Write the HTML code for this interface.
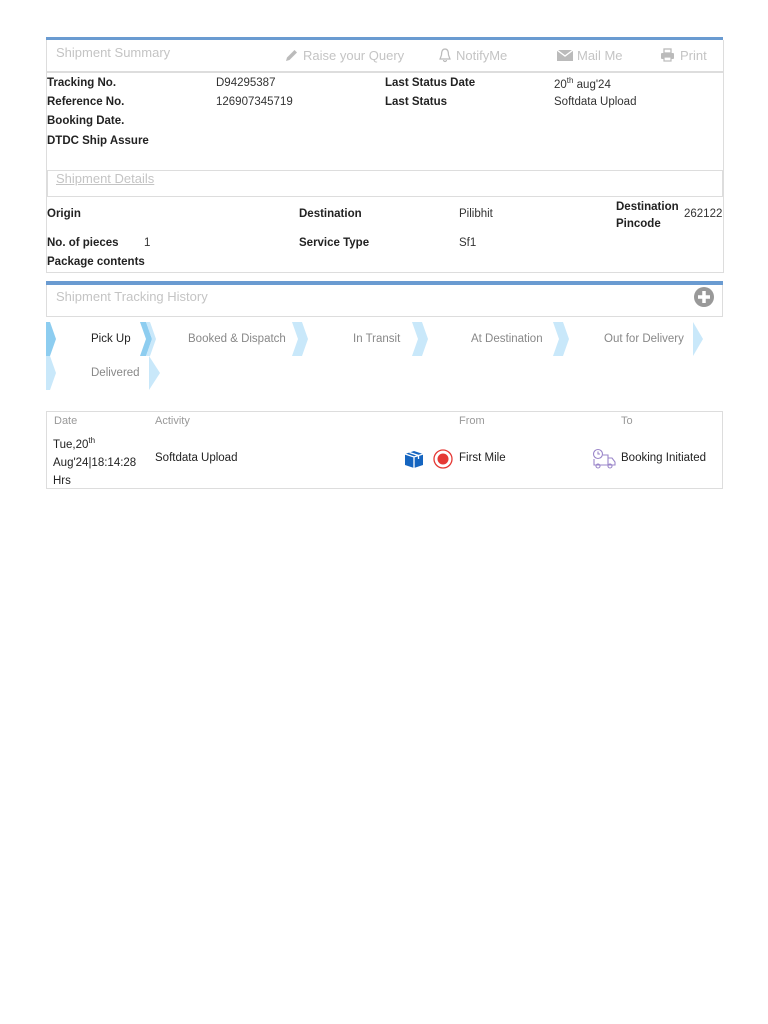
<!DOCTYPE html>
<html><head><meta charset="utf-8"><style>
body{margin:0;width:768px;height:1024px;background:#fff;font-family:"Liberation Sans",sans-serif;font-size:11.5px;color:#333;position:relative;overflow:hidden}
.a{position:absolute;white-space:nowrap}
.b{font-weight:bold;color:#222}
.l{color:#c4c4c4;font-size:13px}
.g{color:#888}
</style></head><body>
<div class="a" style="left:46px;top:37px;width:677px;height:3px;background:#6a9bd1"></div>
<div class="a" style="left:46px;top:40px;width:676px;height:31px;border:1px solid #ddd;border-top:0;border-bottom:2px solid #ddd"></div>
<div class="a" style="left:46px;top:40px;width:676px;height:232px;border-left:1px solid #ddd;border-right:1px solid #ddd;border-bottom:1px solid #ddd"></div>
<div class="a l" style="left:56px;top:45px">Shipment Summary</div>
<svg class="a" style="left:285px;top:48px" width="14" height="14" viewBox="0 0 14 14"><path d="M1 13 L2 9.5 L9.5 2 L12 4.5 L4.5 12 Z" fill="#bbb"/></svg>
<div class="a l" style="left:303px;top:48px">Raise your Query</div>
<svg class="a" style="left:438px;top:47px" width="14" height="16" viewBox="0 0 14 16"><path d="M7 2 C4 2 3.5 5 3.5 8 L2 12 H12 L10.5 8 C10.5 5 10 2 7 2 Z M5.5 13 a1.5 1.5 0 0 0 3 0" fill="none" stroke="#bbb" stroke-width="1.2"/></svg>
<div class="a l" style="left:456px;top:48px">NotifyMe</div>
<svg class="a" style="left:557px;top:49px" width="16" height="13" viewBox="0 0 16 13"><rect x="0" y="1" width="16" height="11" fill="#bbb"/><path d="M0 1 L8 7 L16 1" fill="none" stroke="#fff" stroke-width="1.3"/></svg>
<div class="a l" style="left:577px;top:48px">Mail Me</div>
<svg class="a" style="left:660px;top:48px" width="15" height="14" viewBox="0 0 15 14"><rect x="4" y="1" width="7" height="4" fill="none" stroke="#bbb" stroke-width="1.3"/><rect x="1" y="5" width="13" height="6" rx="1" fill="#bbb"/><rect x="4" y="9" width="7" height="4" fill="#fff" stroke="#bbb" stroke-width="1.2"/></svg>
<div class="a l" style="left:680px;top:48px">Print</div>

<div class="a b" style="left:47px;top:77px">Tracking No.</div>
<div class="a" style="left:216px;top:77px">D94295387</div>
<div class="a b" style="left:385px;top:77px">Last Status Date</div>
<div class="a" style="left:554px;top:76px">20<sup style="font-size:8px">th</sup> aug'24</div>
<div class="a b" style="left:47px;top:96px">Reference No.</div>
<div class="a" style="left:216px;top:96px">126907345719</div>
<div class="a b" style="left:385px;top:96px">Last Status</div>
<div class="a" style="left:554px;top:96px">Softdata Upload</div>
<div class="a b" style="left:47px;top:115px">Booking Date.</div>
<div class="a b" style="left:47px;top:135px">DTDC Ship Assure</div>

<div class="a" style="left:47px;top:170px;width:674px;height:25px;border:1px solid #ddd"></div>
<div class="a l" style="left:56px;top:171px;text-decoration:underline">Shipment Details</div>
<div class="a b" style="left:47px;top:208px">Origin</div>
<div class="a b" style="left:299px;top:208px">Destination</div>
<div class="a" style="left:459px;top:208px">Pilibhit</div>
<div class="a b" style="left:616px;top:199px;line-height:17px">Destination<br>Pincode</div>
<div class="a" style="left:684px;top:208px">262122</div>
<div class="a b" style="left:47px;top:237px">No. of pieces</div>
<div class="a" style="left:144px;top:237px">1</div>
<div class="a b" style="left:299px;top:237px">Service Type</div>
<div class="a" style="left:459px;top:237px">Sf1</div>
<div class="a b" style="left:47px;top:256px">Package contents</div>

<div class="a" style="left:46px;top:281px;width:677px;height:4px;background:#6a9bd1"></div>
<div class="a" style="left:46px;top:285px;width:675px;height:31px;border:1px solid #ddd;border-top:0"></div>
<div class="a l" style="left:56px;top:289px">Shipment Tracking History</div>
<svg class="a" style="left:693px;top:286px" width="22" height="22" viewBox="0 0 22 22"><circle cx="11" cy="11" r="10" fill="#999"/><path d="M11 5v12M5 11h12" stroke="#fff" stroke-width="3.5"/></svg>

<svg class="a" style="left:0;top:0" width="768" height="400">
<polygon points="46,322 50,322 56,339 50,356 46,356" fill="#8dcdf0"/>
<polygon points="140,322 146,322 152,339 146,356 140,356 146,339" fill="#8dcdf0"/>
<polygon points="146,322 150,322 156,339 150,356 146,356 152,339" fill="#c9e8fa"/>
<polygon points="292,322 302,322 308,339 302,356 292,356 298,339" fill="#c9e8fa"/>
<polygon points="412,322 422,322 428,339 422,356 412,356 418,339" fill="#c9e8fa"/>
<polygon points="553,322 563,322 569,339 563,356 553,356 559,339" fill="#c9e8fa"/>
<polygon points="693,322 703,339 693,356" fill="#c9e8fa"/>
<polygon points="46,356 50,356 56,373 50,390 46,390" fill="#c9e8fa"/>
<polygon points="149,356 160,373 149,390" fill="#c9e8fa"/>
</svg>
<div class="a" style="left:91px;top:333px;color:#222">Pick Up</div>
<div class="a g" style="left:188px;top:333px">Booked &amp; Dispatch</div>
<div class="a g" style="left:353px;top:333px">In Transit</div>
<div class="a g" style="left:471px;top:333px">At Destination</div>
<div class="a g" style="left:604px;top:333px">Out for Delivery</div>
<div class="a g" style="left:91px;top:367px">Delivered</div>

<div class="a" style="left:46px;top:411px;width:675px;height:76px;border:1px solid #ddd"></div>
<div class="a" style="left:54px;top:415px;color:#999;font-size:11px">Date</div>
<div class="a" style="left:155px;top:415px;color:#999;font-size:11px">Activity</div>
<div class="a" style="left:459px;top:415px;color:#999;font-size:11px">From</div>
<div class="a" style="left:621px;top:415px;color:#999;font-size:11px">To</div>
<div class="a" style="left:53px;top:432px;line-height:18px;color:#222">Tue,20<sup style="font-size:8px">th</sup><br>Aug'24|18:14:28<br>Hrs</div>
<div class="a" style="left:155px;top:452px;color:#222">Softdata Upload</div>
<svg class="a" style="left:404px;top:449px" width="20" height="20" viewBox="0 0 20 20"><path d="M1 5 L10 2 L19 5 L19 16 L10 19 L1 16Z" fill="#1565c0"/><path d="M1 5 L10 8 L19 5 M10 8 V19 M5.5 3.5 L14.5 6.5 V10" stroke="#fff" stroke-width="1.3" fill="none"/></svg>
<svg class="a" style="left:432px;top:448px" width="22" height="22" viewBox="0 0 22 22"><circle cx="11" cy="11" r="9" fill="none" stroke="#e53935" stroke-width="1.3"/><circle cx="11" cy="11" r="5.5" fill="#e53935"/></svg>
<div class="a" style="left:459px;top:452px;color:#222">First Mile</div>
<svg class="a" style="left:592px;top:448px" width="24" height="22" viewBox="0 0 24 22"><g fill="none" stroke="#9a85c9" stroke-width="1.1"><circle cx="6" cy="6" r="4.5"/><path d="M6 3.5V6H8"/><path d="M2 11V17H16V7H11M16 10H20L23 14V17H16"/><circle cx="6" cy="18" r="2"/><circle cx="18" cy="18" r="2"/></g></svg>
<div class="a" style="left:621px;top:452px;color:#222">Booking Initiated</div>
</body></html>
